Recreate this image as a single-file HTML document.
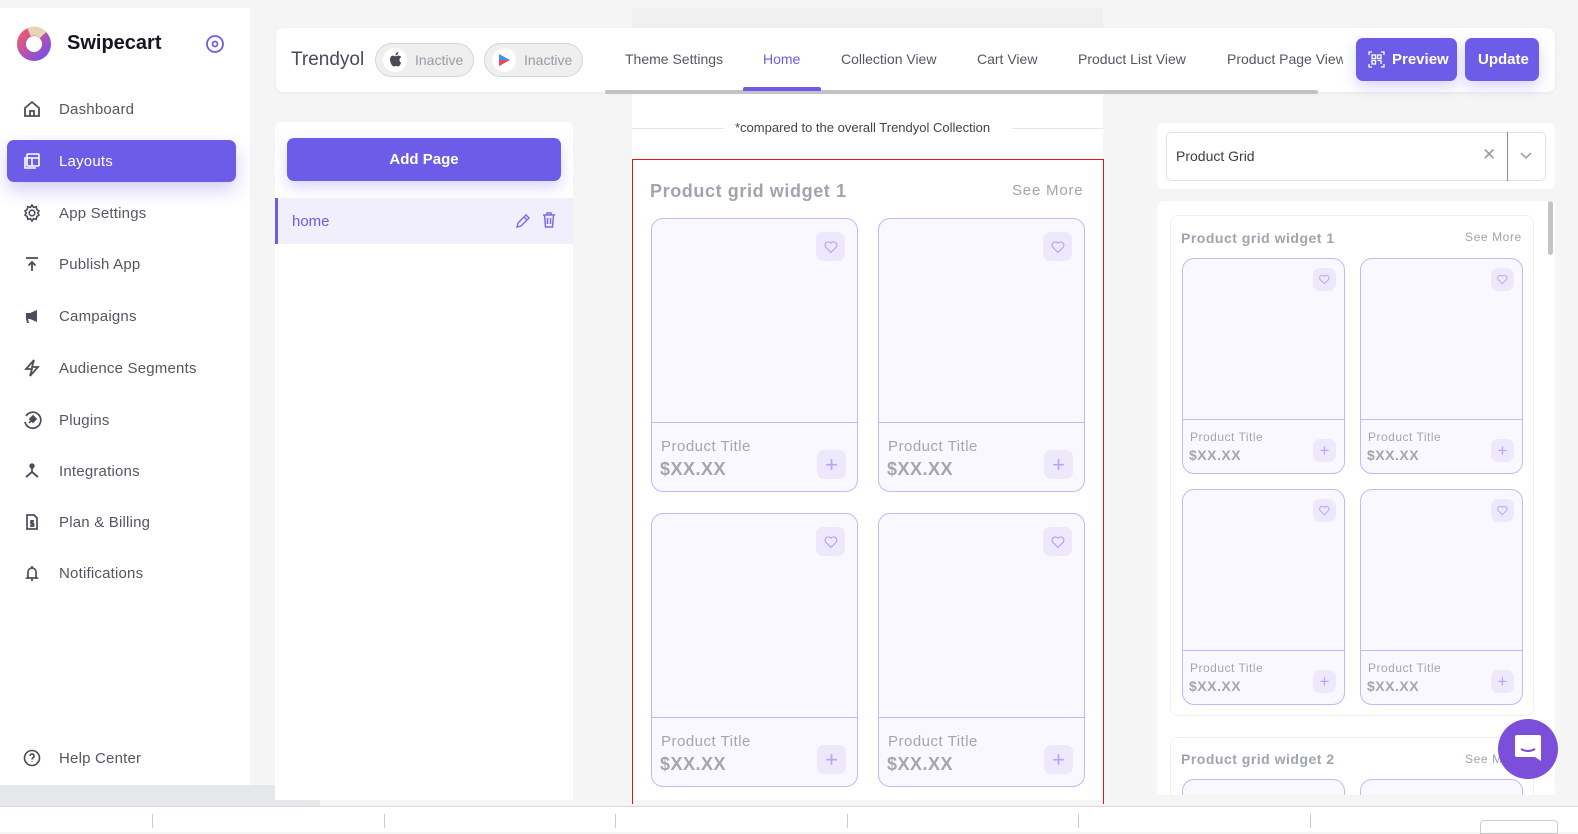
<!DOCTYPE html>
<html><head><meta charset="utf-8"><style>
*{box-sizing:border-box;margin:0;padding:0}
body{width:1578px;height:832px;overflow:hidden;background:#f5f5f6;font-family:"Liberation Sans",sans-serif;position:relative;color:#4b4b5a}
.a{position:absolute}
.nav{position:absolute;left:22px;font-size:15px;color:#555662;display:flex;align-items:center;gap:0}
.nav svg{width:20px;height:20px;margin-right:17px}
.nav span{letter-spacing:.2px}
.tab{position:absolute;top:51px;font-size:14px;color:#555662}
.card{position:absolute;border:1.5px solid #c6b6fa;border-radius:12px;background:#faf8ff;overflow:hidden}
.card .img{position:absolute;left:0;right:0;top:0;border-bottom:1.5px solid #c6b6fa}
.box{position:absolute;background:#eee8fd;border-radius:7px;display:flex;align-items:center;justify-content:center;color:#b9a4f5;font-weight:300}
.box svg{width:55%;height:55%}
.t{position:absolute;color:#a3a6ae;letter-spacing:.5px}
.p{position:absolute;color:#a3a6ae;font-weight:bold;letter-spacing:.5px}
</style></head><body>
<svg width="0" height="0" style="position:absolute"><defs><symbol id="h" viewBox="0 0 16 16"><path d="M8 13.5 2.8 8.3A3 3 0 0 1 8 4.2a3 3 0 0 1 5.2 4.1z" fill="none" stroke="#b9a4f5" stroke-width="1.2"/></symbol></defs></svg>

<!-- sidebar -->
<div class="a" style="left:0;top:8px;width:250px;height:777px;background:#fff"></div>
<div class="a" style="left:0;top:785px;width:320px;height:21px;background:#e6e7ea"></div>
<div class="a" style="left:0;top:806px;width:1578px;height:26px;background:#fff;border-top:1px solid #d9d9dc"></div>
<div class="a" style="left:152px;top:814px;width:1px;height:14px;background:#ccc"></div>
<div class="a" style="left:384px;top:814px;width:1px;height:14px;background:#ccc"></div>
<div class="a" style="left:615px;top:814px;width:1px;height:14px;background:#ccc"></div>
<div class="a" style="left:847px;top:814px;width:1px;height:14px;background:#ccc"></div>
<div class="a" style="left:1078px;top:814px;width:1px;height:14px;background:#ccc"></div>
<div class="a" style="left:1310px;top:814px;width:1px;height:14px;background:#ccc"></div>
<div class="a" style="left:1480px;top:820px;width:78px;height:14px;border:1px solid #ccc;border-radius:4px 4px 0 0"></div>

<svg class="a" style="left:15px;top:26px" width="38" height="36" viewBox="0 0 38 36"><defs><linearGradient id="g" x1="0" y1="0" x2="1" y2="1"><stop offset="0" stop-color="#ef5a6f"/><stop offset="1" stop-color="#7a4ee8"/></linearGradient></defs><circle cx="19" cy="18" r="12.5" fill="none" stroke="url(#g)" stroke-width="9"/><path d="M14 6 A12.5 12.5 0 0 1 28 9" stroke="#e4d6b4" stroke-width="9" fill="none"/></svg>
<div class="a" style="left:67px;top:32px;font-size:20px;font-weight:bold;color:#1a1420">Swipecart</div>
<svg class="a" style="left:205px;top:34px" width="20" height="20" viewBox="0 0 20 20"><circle cx="10" cy="10" r="8" fill="none" stroke="#6c5ce7" stroke-width="1.8"/><circle cx="10" cy="10" r="2.5" fill="none" stroke="#6c5ce7" stroke-width="1.8"/></svg>

<div class="nav" style="top:99px"><svg viewBox="0 0 20 20" fill="none" stroke="#4c4c5a" stroke-width="1.8"><path d="M3 9 10 3l7 6v8H3z M8 17v-5h4v5"/></svg><span>Dashboard</span></div>
<div class="a" style="left:7px;top:140px;width:229px;height:42px;background:#6c5ce7;border-radius:7px;box-shadow:0 8px 18px rgba(108,92,231,.3)"></div>
<div class="nav" style="top:151px;color:#fff"><svg viewBox="0 0 20 20" fill="none" stroke="#fff" stroke-width="1.6"><rect x="5" y="3" width="12" height="12" rx="1"/><path d="M5 7h12M10 7v8M3 6v11h11"/></svg><span>Layouts</span></div>
<div class="nav" style="top:203px"><svg viewBox="0 0 20 20" fill="none" stroke="#4c4c5a" stroke-width="1.6"><circle cx="10" cy="10" r="2.8"/><path d="M10 2l1.5 2.3 2.7-.6.6 2.7L17 8l-1.2 2L17 12l-2.2 1.6-.6 2.7-2.7-.6L10 18l-1.5-2.3-2.7.6-.6-2.7L3 12l1.2-2L3 8l2.2-1.6.6-2.7 2.7.6z"/></svg><span>App Settings</span></div>
<div class="nav" style="top:254px"><svg viewBox="0 0 20 20" fill="none" stroke="#4c4c5a" stroke-width="1.8"><path d="M4 4h12M10 17V8M6.5 11.5 10 8l3.5 3.5"/></svg><span>Publish App</span></div>
<div class="nav" style="top:306px"><svg viewBox="0 0 20 20" fill="#4c4c5a"><path d="M4 7h4l7-3v12l-7-3H6l1 4H5L4 13z"/></svg><span>Campaigns</span></div>
<div class="nav" style="top:358px"><svg viewBox="0 0 20 20" fill="none" stroke="#4c4c5a" stroke-width="1.7"><path d="M12 2 4 11h6l-2 7 8-9h-6z"/></svg><span>Audience Segments</span></div>
<div class="nav" style="top:410px"><svg viewBox="0 0 20 20" fill="none" stroke="#4c4c5a" stroke-width="1.7"><path d="M4 6a8 8 0 1 1-1 6"/><path d="M7 13l2-2M8 9l3 3 3-3-3-3z" fill="#4c4c5a"/></svg><span>Plugins</span></div>
<div class="nav" style="top:461px"><svg viewBox="0 0 20 20" fill="none" stroke="#4c4c5a" stroke-width="1.8"><circle cx="10" cy="5" r="1.8" fill="#4c4c5a"/><path d="M10 6v5l-6 5M10 11l6 5"/></svg><span>Integrations</span></div>
<div class="nav" style="top:512px"><svg viewBox="0 0 20 20" fill="none" stroke="#4c4c5a" stroke-width="1.7"><path d="M5 3h7l3 3v11H5z"/><path d="M12 9h-3v2.5h2.5V14H8M10 8v7"/></svg><span>Plan &amp; Billing</span></div>
<div class="nav" style="top:563px"><svg viewBox="0 0 20 20" fill="none" stroke="#4c4c5a" stroke-width="1.7"><path d="M6 14V9a4 4 0 0 1 8 0v5l1 1H5zM9 17h2M10 3v2"/></svg><span>Notifications</span></div>
<div class="nav" style="top:748px"><svg viewBox="0 0 20 20" fill="none" stroke="#4c4c5a" stroke-width="1.6"><circle cx="10" cy="10" r="7.5"/><path d="M8 8a2 2 0 1 1 3 1.7c-.8.5-1 1-1 1.8M10 13.5v.5"/></svg><span>Help Center</span></div>

<!-- center phone bg -->
<div class="a" style="left:632px;top:8px;width:471px;height:84px;background:#f0f0f1"></div>
<div class="a" style="left:632px;top:92px;width:471px;height:708px;background:#fff"></div>
<div class="a" style="left:632px;top:128px;width:92px;height:1px;background:#e6e6e8"></div>
<div class="a" style="left:1012px;top:128px;width:91px;height:1px;background:#e6e6e8"></div>
<div class="a" style="left:735px;top:120px;font-size:13px;color:#444">*compared to the overall Trendyol Collection</div>
<div class="a" style="left:632px;top:159px;width:472px;height:645px;border:1px solid #e8141c;border-bottom:none"></div>
<div class="a" style="left:650px;top:181px;font-size:18px;font-weight:bold;color:#a0a4ae;letter-spacing:.6px">Product grid widget 1</div>
<div class="a" style="left:1012px;top:182px;font-size:15px;color:#a0a4ae;letter-spacing:.8px">See More</div>

<!-- big cards -->
<div class="card" style="left:651px;top:218px;width:207px;height:274px"><div class="img" style="height:204px"></div><div class="box" style="right:12px;top:13px;width:29px;height:29px"><svg><use href="#h"/></svg></div><div class="t" style="left:9px;top:219px;font-size:15px">Product Title</div><div class="p" style="left:8px;top:240px;font-size:18px">$XX.XX</div><div class="box" style="right:11px;top:231px;width:29px;height:29px;font-size:22px">+</div></div>
<div class="card" style="left:878px;top:218px;width:207px;height:274px"><div class="img" style="height:204px"></div><div class="box" style="right:12px;top:13px;width:29px;height:29px"><svg><use href="#h"/></svg></div><div class="t" style="left:9px;top:219px;font-size:15px">Product Title</div><div class="p" style="left:8px;top:240px;font-size:18px">$XX.XX</div><div class="box" style="right:11px;top:231px;width:29px;height:29px;font-size:22px">+</div></div>
<div class="card" style="left:651px;top:513px;width:207px;height:274px"><div class="img" style="height:204px"></div><div class="box" style="right:12px;top:13px;width:29px;height:29px"><svg><use href="#h"/></svg></div><div class="t" style="left:9px;top:219px;font-size:15px">Product Title</div><div class="p" style="left:8px;top:240px;font-size:18px">$XX.XX</div><div class="box" style="right:11px;top:231px;width:29px;height:29px;font-size:22px">+</div></div>
<div class="card" style="left:878px;top:513px;width:207px;height:274px"><div class="img" style="height:204px"></div><div class="box" style="right:12px;top:13px;width:29px;height:29px"><svg><use href="#h"/></svg></div><div class="t" style="left:9px;top:219px;font-size:15px">Product Title</div><div class="p" style="left:8px;top:240px;font-size:18px">$XX.XX</div><div class="box" style="right:11px;top:231px;width:29px;height:29px;font-size:22px">+</div></div>

<!-- top bar -->
<div class="a" style="left:276px;top:28px;width:1279px;height:64px;background:#fff;border-radius:8px;box-shadow:0 1px 4px rgba(0,0,0,.05)"></div>
<div class="a" style="left:291px;top:49px;font-size:19px;color:#4a4a58">Trendyol</div>
<div class="a" style="left:375px;top:43px;width:99px;height:34px;border:1px solid #d6d6d8;background:#efeff0;border-radius:17px"></div>
<div class="a" style="left:383px;top:48px;width:24px;height:24px;border-radius:12px;background:#fff"></div>
<svg class="a" style="left:389px;top:52px" width="13" height="15" viewBox="0 0 13 15"><path d="M10.5 8c0-2 1.6-2.8 1.7-2.9-.9-1.4-2.4-1.5-2.9-1.5-1.2-.1-2.3.7-2.9.7s-1.5-.7-2.5-.7C2.6 3.6 1 4.9 1 7.5c0 3.3 2.4 7 3.8 7 .8 0 1.2-.5 2.2-.5s1.3.5 2.2.5c1.3 0 2.7-3 2.9-3.8-.1 0-1.6-.7-1.6-2.7zM8.6 2.3C9.1 1.7 9.4.9 9.3 0c-.8.1-1.6.5-2.1 1.1-.5.5-.9 1.4-.8 2.2.8.1 1.7-.4 2.2-1z" fill="#4a4a55"/></svg>
<div class="a" style="left:415px;top:52px;font-size:14px;color:#9a9aa2">Inactive</div>
<div class="a" style="left:484px;top:43px;width:99px;height:34px;border:1px solid #d6d6d8;background:#efeff0;border-radius:17px"></div>
<div class="a" style="left:492px;top:48px;width:24px;height:24px;border-radius:12px;background:#fff"></div>
<svg class="a" style="left:498px;top:53px" width="13" height="14" viewBox="0 0 13 14"><path d="M1 1l11 6-11 6z" fill="#4a8ef0"/><path d="M1 7h11L1 13z" fill="#e94b5a"/></svg>
<div class="a" style="left:524px;top:52px;font-size:14px;color:#9a9aa2">Inactive</div>
<div class="tab" style="left:625px">Theme Settings</div>
<div class="tab" style="left:763px;color:#6c5ce7">Home</div>
<div class="tab" style="left:841px">Collection View</div>
<div class="tab" style="left:977px">Cart View</div>
<div class="tab" style="left:1078px">Product List View</div>
<div class="tab" style="left:1227px;width:116px;overflow:hidden;white-space:nowrap">Product Page View</div>
<div class="a" style="left:605px;top:90px;width:713px;height:4px;background:#c2c2c4;border-radius:2px"></div>
<div class="a" style="left:743px;top:87px;width:78px;height:4px;background:#6c5ce7;border-radius:2px 2px 0 0"></div>
<div class="a" style="left:1356px;top:38px;width:101px;height:43px;background:#6c5ce7;border-radius:7px;box-shadow:0 6px 14px rgba(108,92,231,.25)"></div>
<svg class="a" style="left:1368px;top:51px" width="17" height="17" viewBox="0 0 17 17" fill="none" stroke="#fff" stroke-width="1.3"><path d="M1 4V1h3M13 1h3v3M16 13v3h-3M4 16H1v-3"/><rect x="4" y="4" width="3.5" height="3.5"/><rect x="9.5" y="4" width="3.5" height="3.5"/><rect x="4" y="9.5" width="3.5" height="3.5"/><path d="M9.5 9.5h3.5v3.5"/></svg>
<div class="a" style="left:1392px;top:51px;font-size:15px;font-weight:bold;color:#fff">Preview</div>
<div class="a" style="left:1465px;top:38px;width:74px;height:43px;background:#6c5ce7;border-radius:7px;box-shadow:0 6px 14px rgba(108,92,231,.25)"></div>
<div class="a" style="left:1478px;top:51px;font-size:15px;font-weight:bold;color:#fff">Update</div>

<!-- pages panel -->
<div class="a" style="left:275px;top:122px;width:298px;height:678px;background:#fff;border-radius:6px 6px 0 0"></div>
<div class="a" style="left:287px;top:138px;width:274px;height:43px;background:#6c5ce7;border-radius:7px;box-shadow:0 6px 14px rgba(108,92,231,.25);color:#fff;font-size:15px;font-weight:bold;text-align:center;line-height:43px">Add Page</div>
<div class="a" style="left:275px;top:198px;width:298px;height:46px;background:#f1effc;border-left:3px solid #6c5ce7"></div>
<div class="a" style="left:292px;top:213px;font-size:15px;color:#6c5ce7">home</div>
<svg class="a" style="left:514px;top:212px" width="18" height="18" viewBox="0 0 18 18" fill="none" stroke="#7b6ce9" stroke-width="1.4"><path d="M3 15l1-4 8-8 3 3-8 8zM10 5l3 3"/></svg>
<svg class="a" style="left:541px;top:211px" width="16" height="18" viewBox="0 0 16 18" fill="none" stroke="#7b6ce9" stroke-width="1.5"><path d="M2 4h12M6 4V2h4v2M3.5 4l1 12h7l1-12M6.5 7v6M9.5 7v6"/></svg>

<!-- right panel -->
<div class="a" style="left:1157px;top:123px;width:398px;height:66px;background:#fff;border-radius:6px"></div>
<div class="a" style="left:1166px;top:132px;width:380px;height:49px;border:1px solid #e2e2e6;border-radius:5px"></div>
<div class="a" style="left:1507px;top:132px;width:1px;height:49px;background:#8a8a90"></div>
<div class="a" style="left:1176px;top:148px;font-size:14px;color:#3d3d48">Product Grid</div>
<div class="a" style="left:1482px;top:145px;font-size:17px;color:#9a9aa0">✕</div>
<svg class="a" style="left:1519px;top:151px" width="14" height="10" viewBox="0 0 14 10"><path d="M2 2l5 5 5-5" fill="none" stroke="#a0a0a6" stroke-width="1.6"/></svg>
<div class="a" style="left:1157px;top:201px;width:398px;height:594px;background:#fff;border-radius:6px 6px 0 0;overflow:hidden">
  <div class="a" style="left:391px;top:0;width:5px;height:54px;background:#c4c4c6;border-radius:3px"></div>
  <div class="a" style="left:13px;top:14px;width:364px;height:501px;border:1px solid #f0f0f2;border-radius:8px"></div>
  <div class="a" style="left:24px;top:29px;font-size:14px;font-weight:bold;color:#a0a4ae;letter-spacing:.5px">Product grid widget 1</div>
  <div class="a" style="left:308px;top:29px;font-size:12px;color:#a0a4ae;letter-spacing:.6px">See More</div>
  <div class="card" style="left:25px;top:57px;width:163px;height:216px"><div class="img" style="height:161px"></div><div class="box" style="right:8px;top:9px;width:23px;height:23px"><svg><use href="#h"/></svg></div><div class="t" style="left:7px;top:171px;font-size:12px">Product Title</div><div class="p" style="left:6px;top:188px;font-size:14px">$XX.XX</div><div class="box" style="right:8px;top:180px;width:23px;height:23px;font-size:17px">+</div></div>
  <div class="card" style="left:203px;top:57px;width:163px;height:216px"><div class="img" style="height:161px"></div><div class="box" style="right:8px;top:9px;width:23px;height:23px"><svg><use href="#h"/></svg></div><div class="t" style="left:7px;top:171px;font-size:12px">Product Title</div><div class="p" style="left:6px;top:188px;font-size:14px">$XX.XX</div><div class="box" style="right:8px;top:180px;width:23px;height:23px;font-size:17px">+</div></div>
  <div class="card" style="left:25px;top:288px;width:163px;height:216px"><div class="img" style="height:161px"></div><div class="box" style="right:8px;top:9px;width:23px;height:23px"><svg><use href="#h"/></svg></div><div class="t" style="left:7px;top:171px;font-size:12px">Product Title</div><div class="p" style="left:6px;top:188px;font-size:14px">$XX.XX</div><div class="box" style="right:8px;top:180px;width:23px;height:23px;font-size:17px">+</div></div>
  <div class="card" style="left:203px;top:288px;width:163px;height:216px"><div class="img" style="height:161px"></div><div class="box" style="right:8px;top:9px;width:23px;height:23px"><svg><use href="#h"/></svg></div><div class="t" style="left:7px;top:171px;font-size:12px">Product Title</div><div class="p" style="left:6px;top:188px;font-size:14px">$XX.XX</div><div class="box" style="right:8px;top:180px;width:23px;height:23px;font-size:17px">+</div></div>
  <div class="a" style="left:13px;top:536px;width:364px;height:80px;border:1px solid #f0f0f2;border-radius:8px"></div>
  <div class="a" style="left:24px;top:550px;font-size:14px;font-weight:bold;color:#a0a4ae;letter-spacing:.5px">Product grid widget 2</div>
  <div class="a" style="left:308px;top:551px;font-size:12px;color:#a0a4ae;letter-spacing:.6px">See More</div>
  <div class="a" style="left:25px;top:578px;width:163px;height:40px;border:1.5px solid #c6b6fa;border-radius:12px;background:#faf8ff"></div>
  <div class="a" style="left:203px;top:578px;width:163px;height:40px;border:1.5px solid #c6b6fa;border-radius:12px;background:#faf8ff"></div>
</div>

<!-- chat -->
<div class="a" style="left:1498px;top:719px;width:60px;height:60px;border-radius:30px;background:#7c4fdb"></div>
<svg class="a" style="left:1513px;top:733px" width="30" height="30" viewBox="0 0 30 30"><path d="M4 2h22a2 2 0 0 1 2 2v24l-6-4H4a2 2 0 0 1-2-2V4a2 2 0 0 1 2-2z" fill="#fff"/><path d="M8 16q7 4 14 0" fill="none" stroke="#7c4fdb" stroke-width="2"/></svg>
</body></html>
